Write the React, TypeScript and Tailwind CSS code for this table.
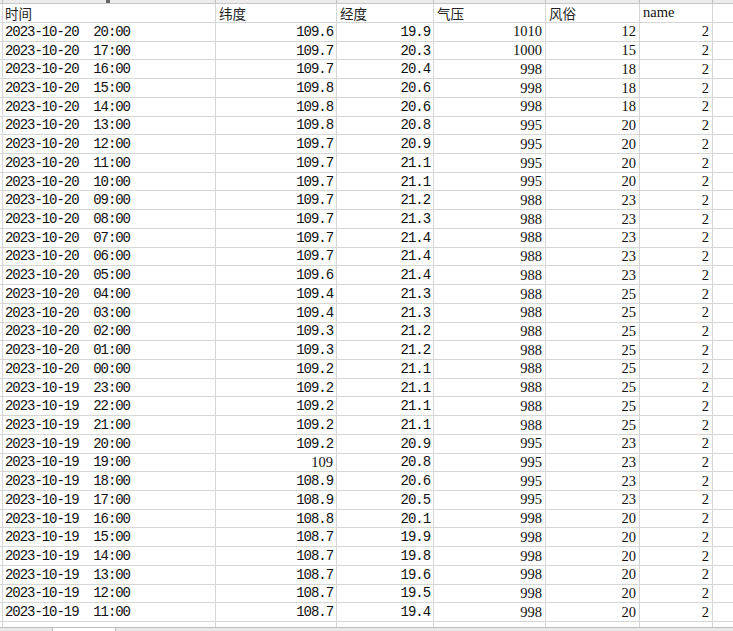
import React from "react";

const raw: [string, string, string, string, number, number][] = [
  ["2023-10-20", "20:00", "109.6", "19.9", 1010, 12],
  ["2023-10-20", "17:00", "109.7", "20.3", 1000, 15],
  ["2023-10-20", "16:00", "109.7", "20.4", 998, 18],
  ["2023-10-20", "15:00", "109.8", "20.6", 998, 18],
  ["2023-10-20", "14:00", "109.8", "20.6", 998, 18],
  ["2023-10-20", "13:00", "109.8", "20.8", 995, 20],
  ["2023-10-20", "12:00", "109.7", "20.9", 995, 20],
  ["2023-10-20", "11:00", "109.7", "21.1", 995, 20],
  ["2023-10-20", "10:00", "109.7", "21.1", 995, 20],
  ["2023-10-20", "09:00", "109.7", "21.2", 988, 23],
  ["2023-10-20", "08:00", "109.7", "21.3", 988, 23],
  ["2023-10-20", "07:00", "109.7", "21.4", 988, 23],
  ["2023-10-20", "06:00", "109.7", "21.4", 988, 23],
  ["2023-10-20", "05:00", "109.6", "21.4", 988, 23],
  ["2023-10-20", "04:00", "109.4", "21.3", 988, 25],
  ["2023-10-20", "03:00", "109.4", "21.3", 988, 25],
  ["2023-10-20", "02:00", "109.3", "21.2", 988, 25],
  ["2023-10-20", "01:00", "109.3", "21.2", 988, 25],
  ["2023-10-20", "00:00", "109.2", "21.1", 988, 25],
  ["2023-10-19", "23:00", "109.2", "21.1", 988, 25],
  ["2023-10-19", "22:00", "109.2", "21.1", 988, 25],
  ["2023-10-19", "21:00", "109.2", "21.1", 988, 25],
  ["2023-10-19", "20:00", "109.2", "20.9", 995, 23],
  ["2023-10-19", "19:00", "109", "20.8", 995, 23],
  ["2023-10-19", "18:00", "108.9", "20.6", 995, 23],
  ["2023-10-19", "17:00", "108.9", "20.5", 995, 23],
  ["2023-10-19", "16:00", "108.8", "20.1", 998, 20],
  ["2023-10-19", "15:00", "108.7", "19.9", 998, 20],
  ["2023-10-19", "14:00", "108.7", "19.8", 998, 20],
  ["2023-10-19", "13:00", "108.7", "19.6", 998, 20],
  ["2023-10-19", "12:00", "108.7", "19.5", 998, 20],
  ["2023-10-19", "11:00", "108.7", "19.4", 998, 20],
];

const mono = "font-['Liberation_Mono',monospace] text-[14px] tracking-[-1.05px] text-[#111]";
const serif = "font-['Liberation_Serif',serif] text-[14.5px] text-[#111]";
const cjk = "font-['Noto_Sans_CJK_SC',sans-serif] text-[13.5px] text-[#222]";

function Num({ v }: { v: string | number }) {
  const s = String(v);
  const isInt = !s.includes(".");
  return <span className={isInt ? serif : mono}>{s}</span>;
}

const cell = "border-r border-b border-[#d6d6d6] flex items-center overflow-hidden whitespace-nowrap";

export default function App() {
  return (
    <div className="w-[733px] h-[631px] bg-white overflow-hidden text-[#1c1c1c] flex flex-col">
      {/* top strip */}
      <div className="flex h-[4px] shrink-0 bg-[#ececec] border-b border-[#c8c8c8]">
        <div className="w-[3px] border-r border-[#bdbdbd]" />
        <div className="w-[213px] border-r border-[#bdbdbd] relative">
          <div className="absolute left-[103px] top-0 w-[4px] h-[3px] bg-[#666]" />
        </div>
        <div className="w-[121px] border-r border-[#bdbdbd]" />
        <div className="w-[97px] border-r border-[#bdbdbd]" />
        <div className="w-[112px] border-r border-[#bdbdbd]" />
        <div className="w-[94px] border-r border-[#bdbdbd]" />
        <div className="w-[73px] border-r border-[#bdbdbd]" />
        <div className="flex-1" />
      </div>
      {/* header */}
      <div className="flex h-[19px] shrink-0">
        <div className={`w-[3px] ${cell}`} />
        <div className={`w-[213px] pl-[2px] ${cell} ${cjk}`}>时间</div>
        <div className={`w-[121px] pl-[3px] ${cell} ${cjk}`}>纬度</div>
        <div className={`w-[97px] pl-[3px] ${cell} ${cjk}`}>经度</div>
        <div className={`w-[112px] pl-[3px] ${cell} ${cjk}`}>气压</div>
        <div className={`w-[94px] pl-[3px] ${cell} ${cjk}`}>风俗</div>
        <div className={`w-[73px] pl-[3px] ${cell} ${serif}`}>name</div>
        <div className={`flex-1 ${cell} border-r-0`} />
      </div>
      {raw.map((r, i) => (
        <div key={i} className="flex h-[18.72px] shrink-0">
          <div className={`w-[3px] ${cell}`} />
          <div className={`w-[213px] pl-[2px] pt-[1px] ${cell} ${mono}`}>
            {r[0]}&nbsp;&nbsp;{r[1]}
          </div>
          <div className={`w-[121px] justify-end pr-[3px] pt-[1px] ${cell}`}>
            <Num v={r[2]} />
          </div>
          <div className={`w-[97px] justify-end pr-[3px] pt-[1px] ${cell}`}>
            <Num v={r[3]} />
          </div>
          <div className={`w-[112px] justify-end pr-[3px] pt-[1px] ${cell}`}>
            <Num v={r[4]} />
          </div>
          <div className={`w-[94px] justify-end pr-[3px] pt-[1px] ${cell}`}>
            <Num v={r[5]} />
          </div>
          <div className={`w-[73px] justify-end pr-[3px] pt-[1px] ${cell}`}>
            <Num v={2} />
          </div>
          <div className={`flex-1 ${cell} border-r-0`} />
        </div>
      ))}
      {/* gap row */}
      <div className="flex h-[5px] shrink-0">
        <div className="w-[3px] border-r border-[#d6d6d6]" />
        <div className="w-[213px] border-r border-[#d6d6d6]" />
        <div className="w-[121px] border-r border-[#d6d6d6]" />
        <div className="w-[97px] border-r border-[#d6d6d6]" />
        <div className="w-[112px] border-r border-[#d6d6d6]" />
        <div className="w-[94px] border-r border-[#d6d6d6]" />
        <div className="w-[73px] border-r border-[#d6d6d6]" />
        <div className="flex-1" />
      </div>
      {/* bottom bar */}
      <div className="flex flex-1 border-t border-[#bcbcbc] bg-[#f2f2f2]">
        <div className="w-[53px] border-r border-[#bcbcbc] bg-[#e9e9e9]" />
        <div className="w-[62px] bg-white" />
        <div className="flex-1 border-l border-[#bcbcbc] bg-[#e9e9e9]" />
      </div>
    </div>
  );
}
